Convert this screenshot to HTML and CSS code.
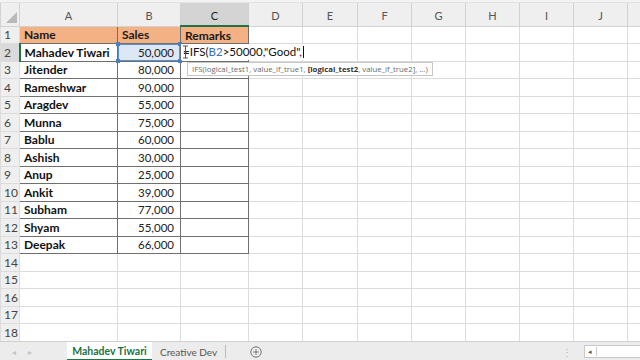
FILE: index.html
```
<!DOCTYPE html>
<html>
<head>
  <title>Sales Sheet</title>
  <link rel="stylesheet" href="styles.css">
</head>
<body>
  <div class="topstrip"></div>
  <div class="sheet-wrap">
    <table class="sheet">
      <colgroup>
        <col style="width:19px"><col style="width:98px"><col style="width:63px"><col style="width:68px">
        <col style="width:54px"><col style="width:55px"><col style="width:54px"><col style="width:54px">
        <col style="width:54px"><col style="width:54px"><col style="width:54px"><col style="width:13px">
      </colgroup>
      <tr class="colhead">
        <th class="corner"><span class="tri"></span></th>
        <th>A</th><th>B</th><th class="sel">C</th><th>D</th><th>E</th><th>F</th><th>G</th><th>H</th><th>I</th><th>J</th><th></th>
      </tr>
      <tr>
        <th class="rh">1</th>
        <td class="d hd">Name</td><td class="d hd">Sales</td><td class="d hd">Remarks</td>
        <td></td><td></td><td></td><td></td><td></td><td></td><td></td><td></td>
      </tr>
      <tr>
        <th class="rh active">2</th>
        <td class="d name">Mahadev Tiwari</td>
        <td class="d num ref">50,000<i class="h tl"></i><i class="h tr"></i><i class="h bl"></i><i class="h br"></i></td>
        <td class="d edit">
          <span class="edit-text">=IFS(<span class="blue">B2</span>&gt;50000,"Good",<span class="caret"></span></span>
          <svg class="ibeam" width="7" height="14" viewBox="0 0 7 14"><path d="M1 1h5M3.5 1v12M1 13h5M2 7h3" stroke="#555" stroke-width="1" fill="none"/></svg>
          <div class="tip">IFS(logical_test1, value_if_true1, <b>[logical_test2</b>, value_if_true2], ...)</div>
        </td>
        <td></td><td></td><td></td><td></td><td></td><td></td><td></td><td></td>
      </tr>
      <tr><th class="rh">3</th><td class="d name">Jitender</td><td class="d num">80,000</td><td class="d"></td><td></td><td></td><td></td><td></td><td></td><td></td><td></td><td></td></tr>
      <tr><th class="rh">4</th><td class="d name">Rameshwar</td><td class="d num">90,000</td><td class="d"></td><td></td><td></td><td></td><td></td><td></td><td></td><td></td><td></td></tr>
      <tr><th class="rh">5</th><td class="d name">Aragdev</td><td class="d num">55,000</td><td class="d"></td><td></td><td></td><td></td><td></td><td></td><td></td><td></td><td></td></tr>
      <tr><th class="rh">6</th><td class="d name">Munna</td><td class="d num">75,000</td><td class="d"></td><td></td><td></td><td></td><td></td><td></td><td></td><td></td><td></td></tr>
      <tr><th class="rh">7</th><td class="d name">Bablu</td><td class="d num">60,000</td><td class="d"></td><td></td><td></td><td></td><td></td><td></td><td></td><td></td><td></td></tr>
      <tr><th class="rh">8</th><td class="d name">Ashish</td><td class="d num">30,000</td><td class="d"></td><td></td><td></td><td></td><td></td><td></td><td></td><td></td><td></td></tr>
      <tr><th class="rh">9</th><td class="d name">Anup</td><td class="d num">25,000</td><td class="d"></td><td></td><td></td><td></td><td></td><td></td><td></td><td></td><td></td></tr>
      <tr><th class="rh">10</th><td class="d name">Ankit</td><td class="d num">39,000</td><td class="d"></td><td></td><td></td><td></td><td></td><td></td><td></td><td></td><td></td></tr>
      <tr><th class="rh">11</th><td class="d name">Subham</td><td class="d num">77,000</td><td class="d"></td><td></td><td></td><td></td><td></td><td></td><td></td><td></td><td></td></tr>
      <tr><th class="rh">12</th><td class="d name">Shyam</td><td class="d num">55,000</td><td class="d"></td><td></td><td></td><td></td><td></td><td></td><td></td><td></td><td></td></tr>
      <tr><th class="rh">13</th><td class="d name">Deepak</td><td class="d num">66,000</td><td class="d"></td><td></td><td></td><td></td><td></td><td></td><td></td><td></td><td></td></tr>
      <tr><th class="rh">14</th><td></td><td></td><td></td><td></td><td></td><td></td><td></td><td></td><td></td><td></td><td></td></tr>
      <tr><th class="rh">15</th><td></td><td></td><td></td><td></td><td></td><td></td><td></td><td></td><td></td><td></td><td></td></tr>
      <tr><th class="rh">16</th><td></td><td></td><td></td><td></td><td></td><td></td><td></td><td></td><td></td><td></td><td></td></tr>
      <tr><th class="rh">17</th><td></td><td></td><td></td><td></td><td></td><td></td><td></td><td></td><td></td><td></td><td></td></tr>
      <tr><th class="rh">18</th><td></td><td></td><td></td><td></td><td></td><td></td><td></td><td></td><td></td><td></td><td></td></tr>
    </table>
  </div>

  <div class="tabbar">
    <div class="nav">
      <span class="arrow">&#9666;</span>
      <span class="arrow">&#9656;</span>
    </div>
    <div class="tab active-tab">Mahadev Tiwari</div>
    <div class="tab">Creative Dev</div>
    <div class="tab-sep"></div>
    <div class="add">
      <svg width="12" height="12" viewBox="0 0 12 12"><circle cx="6" cy="6" r="5.2" stroke="#777" fill="none"/><path d="M6 3.2v5.6M3.2 6h5.6" stroke="#777"/></svg>
    </div>
    <div class="spacer"></div>
    <div class="dots">&#8942;</div>
    <div class="hscroll"><span class="larrow">&#9666;</span></div>
  </div>
</body>
</html>
```

FILE: styles.css
```
/* worksheet look */
body {
  margin: 0;
  width: 640px;
  height: 360px;
  overflow: hidden;
  background: #fff;
  font-family: Lato, "Open Sans", sans-serif;
}

.topstrip {
  height: 3px;
  background: #f3f3f3;
  border-bottom: 1px solid #e2e2e2;
  box-sizing: border-box;
}

.sheet-wrap {
  height: 338px;
  overflow: hidden;
}

.sheet {
  border-collapse: collapse;
  table-layout: fixed;
  width: 640px;
}

.sheet td,
.sheet th {
  height: 17.5px;
  padding: 0;
  border: 1px solid #dcdcdc;
  font-size: 12px;
  white-space: nowrap;
  box-sizing: border-box;
}

.sheet td:last-child {
  border-right: none;
}

.colhead th {
  height: 23px;
  background: #efefef;
  border-color: #d2d2d2;
  border-top: none;
  font-weight: normal;
  font-size: 11px;
  color: #555;
  padding-top: 3px;
}

.colhead th.sel {
  background: #d4d4d4;
  color: #222;
  border-bottom: 2px solid #217346;
}

.corner {
  position: relative;
}

.corner .tri {
  position: absolute;
  left: 5px;
  bottom: 3px;
  width: 0;
  height: 0;
  border-left: 11px solid transparent;
  border-bottom: 11px solid #b8b8b8;
}

.rh {
  background: #efefef;
  font-weight: normal;
  color: #444;
  text-align: left;
  padding-left: 3px !important;
  border-color: #d2d2d2;
  border-right: 1px solid #a8a8a8;
}

.rh.active {
  background: #dadada;
  border-right: 2px solid #217346;
}

.d {
  border: 1px solid #6f6f6f !important;
  padding: 0 4px !important;
}

.hd {
  background: #f4b183;
  font-weight: bold;
  color: #1a1a1a;
}

.name {
  font-weight: bold;
  color: #111;
}

.num {
  text-align: right;
  color: #222;
  font-size: 11.5px !important;
  padding-right: 6px !important;
}

.ref {
  position: relative;
  background: #dde8f6;
  box-shadow: inset 0 0 0 1px #5b8fd0;
}

.h {
  position: absolute;
  width: 4px;
  height: 4px;
  background: #4a7fc6;
}

.h.tl { left: -2px; top: -2px; }
.h.tr { right: -2px; top: -2px; }
.h.bl { left: -2px; bottom: -2px; }
.h.br { right: -2px; bottom: -2px; }

.edit {
  position: relative;
  overflow: visible;
}

.edit-text {
  position: absolute;
  left: 0;
  top: 0;
  height: 16px;
  padding: 0 3px 0 2px;
  line-height: 16px;
  font-size: 11.5px;
  background: #fff;
  color: #111;
  z-index: 2;
}

.blue {
  color: #3a6fc4;
}

.caret {
  display: inline-block;
  width: 1px;
  height: 12px;
  background: #111;
  vertical-align: -2px;
  margin-left: 1px;
}

.ibeam {
  position: absolute;
  left: 1px;
  top: 1px;
  z-index: 3;
}

.tip {
  position: absolute;
  left: 6px;
  top: 18px;
  height: 14px;
  line-height: 13px;
  padding: 0 4px;
  background: #fff;
  border: 1px solid #c6c6c6;
  box-sizing: border-box;
  font-family: "Open Sans", sans-serif;
  font-size: 7.8px;
  color: #6a6a6a;
  z-index: 3;
}

.tip b {
  color: #333;
}

/* sheet tabs */
.tabbar {
  height: 19px;
  background: #ececec;
  border-top: 1px solid #d0d0d0;
  display: flex;
  align-items: stretch;
  font-family: Lato, sans-serif;
  font-size: 10px;
  white-space: nowrap;
}

.nav {
  width: 67px;
  display: flex;
  align-items: center;
  padding-left: 12px;
  gap: 12px;
  box-sizing: border-box;
}

.arrow {
  color: #c4c4c4;
  font-size: 8px;
}

.tab {
  padding: 0 8px;
  display: flex;
  align-items: center;
  color: #555;
}

.active-tab {
  width: 85px;
  padding: 0;
  justify-content: center;
  background: #fff;
  color: #217346;
  font-weight: bold;
  font-size: 10.5px;
  border-bottom: 2px solid #217346;
  box-sizing: border-box;
}

.tab-sep {
  width: 1px;
  margin: 3px 0;
  background: #b9b9b9;
}

.add {
  display: flex;
  align-items: center;
  margin-left: 24px;
}

.spacer {
  flex: 1;
}

.dots {
  display: flex;
  align-items: center;
  color: #b0b0b0;
  margin-right: 12px;
  font-size: 10px;
}

.hscroll {
  width: 55px;
  margin: 3px 0;
  background: #fff;
  border: 1px solid #c8c8c8;
  border-right: none;
  display: flex;
  align-items: center;
}

.larrow {
  font-size: 7px;
  color: #555;
  padding: 0 4px 0 3px;
  border-right: 1px solid #c8c8c8;
}
```
